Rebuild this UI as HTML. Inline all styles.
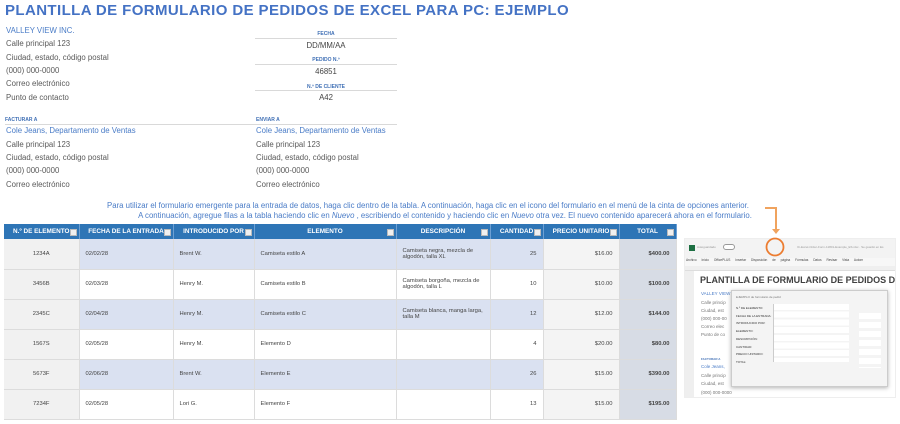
<!DOCTYPE html>
<html><head><meta charset="utf-8"><style>
*{margin:0;padding:0;box-sizing:border-box}
body{width:900px;height:424px;background:#fff;position:relative;overflow:hidden;font-family:"Liberation Sans",sans-serif;color:#595959}
.a{position:absolute;white-space:nowrap}
.t{font-size:7.8px;line-height:9px}
.blue{color:#4a7cc7}
.lbl{font-size:5px;font-weight:bold;color:#3f6fb5}
.hl{position:absolute;height:1px;background:#d9d9d9}
table{position:absolute;left:4px;top:224px;border-collapse:collapse;table-layout:fixed;font-size:5.8px}
th{background:#2e75b6;color:#fff;height:15px;font-size:6.4px;font-weight:bold;position:relative;border-right:1px solid #6d9fd3}
th i{position:absolute;right:2px;top:5px;width:7px;height:7px;background:#f0f0f0;border:1px solid #bbb}
td{height:30px;border-bottom:1.5px solid #dcdcdc;border-right:1px solid #dcdcdc;padding:0 6px;color:#444}
td.c1{background:#f1f1f1;text-align:center}
tr.o td.b{background:#dae1f1}
td.p{background:#f4f4f4;text-align:right}
td.tt{background:#d7dce5;text-align:right;font-weight:bold}
td.r{text-align:right}
</style></head><body>
<div class="a" style="left:5px;top:2px;font-size:15px;font-weight:bold;color:#4472c4;letter-spacing:0.4px">PLANTILLA DE FORMULARIO DE PEDIDOS DE EXCEL PARA PC: EJEMPLO</div>

<div class="a t blue" style="left:6px;top:26px">VALLEY VIEW INC.</div>
<div class="a t" style="left:6px;top:39px">Calle principal 123</div>
<div class="a t" style="left:6px;top:53px">Ciudad, estado, código postal</div>
<div class="a t" style="left:6px;top:66px">(000) 000-0000</div>
<div class="a t" style="left:6px;top:79px">Correo electrónico</div>
<div class="a t" style="left:6px;top:93px">Punto de contacto</div>

<div class="a lbl" style="left:255px;width:142px;text-align:center;top:31px">FECHA</div>
<div class="hl" style="left:255px;width:142px;top:38px"></div>
<div class="a t" style="left:255px;width:142px;text-align:center;top:41px;color:#444">DD/MM/AA</div>
<div class="a lbl" style="left:255px;width:142px;text-align:center;top:57px">PEDIDO N.º</div>
<div class="hl" style="left:255px;width:142px;top:64px"></div>
<div class="a t" style="left:255px;width:142px;text-align:center;top:67px;color:#444">46851</div>
<div class="a lbl" style="left:255px;width:142px;text-align:center;top:84px">N.º DE CLIENTE</div>
<div class="hl" style="left:255px;width:142px;top:90px"></div>
<div class="a t" style="left:255px;width:142px;text-align:center;top:93px;color:#444">A42</div>

<div class="a lbl" style="left:5px;top:117px">FACTURAR A</div>
<div class="a lbl" style="left:256px;top:117px">ENVIAR A</div>
<div class="hl" style="left:5px;width:392px;top:124px"></div>
<div class="a t blue" style="left:6px;top:126px">Cole Jeans, Departamento de Ventas</div>
<div class="a t" style="left:6px;top:140px">Calle principal 123</div>
<div class="a t" style="left:6px;top:153px">Ciudad, estado, código postal</div>
<div class="a t" style="left:6px;top:166px">(000) 000-0000</div>
<div class="a t" style="left:6px;top:180px">Correo electrónico</div>
<div class="a t blue" style="left:256px;top:126px">Cole Jeans, Departamento de Ventas</div>
<div class="a t" style="left:256px;top:140px">Calle principal 123</div>
<div class="a t" style="left:256px;top:153px">Ciudad, estado, código postal</div>
<div class="a t" style="left:256px;top:166px">(000) 000-0000</div>
<div class="a t" style="left:256px;top:180px">Correo electrónico</div>

<div class="a t blue" style="left:0;width:856px;text-align:center;top:201px;font-size:7.8px">Para utilizar el formulario emergente para la entrada de datos, haga clic dentro de la tabla. A continuación, haga clic en el icono del formulario en el menú de la cinta de opciones anterior.</div>
<div class="a t blue" style="left:0;width:890px;text-align:center;top:211px;font-size:7.8px">A continuación, agregue filas a la tabla haciendo clic en <i>Nuevo</i> , escribiendo el contenido y haciendo clic en <i>Nuevo</i>  otra vez. El nuevo contenido aparecerá ahora en el formulario.</div>

<table>
<colgroup><col style="width:75px"><col style="width:94px"><col style="width:81px"><col style="width:142px"><col style="width:94px"><col style="width:53px"><col style="width:76px"><col style="width:57px"></colgroup>
<tr><th>N.º DE ELEMENTO<i></i></th><th>FECHA DE LA ENTRADA<i></i></th><th>INTRODUCIDO POR<i></i></th><th>ELEMENTO<i></i></th><th>DESCRIPCIÓN<i></i></th><th>CANTIDAD<i></i></th><th>PRECIO UNITARIO<i></i></th><th>TOTAL<i></i></th></tr>
<tr class="o"><td class="c1">1234A</td><td class="b">02/02/28</td><td class="b">Brent W.</td><td class="b">Camiseta estilo A</td><td class="b">Camiseta negra, mezcla de algodón, talla XL</td><td class="b r">25</td><td class="p">$16.00</td><td class="tt">$400.00</td></tr>
<tr><td class="c1">3456B</td><td>02/03/28</td><td>Henry M.</td><td>Camiseta estilo B</td><td>Camiseta borgoña, mezcla de algodón, talla L</td><td class="r">10</td><td class="p">$10.00</td><td class="tt">$100.00</td></tr>
<tr class="o"><td class="c1">2345C</td><td class="b">02/04/28</td><td class="b">Henry M.</td><td class="b">Camiseta estilo C</td><td class="b">Camiseta blanca, manga larga, talla M</td><td class="b r">12</td><td class="p">$12.00</td><td class="tt">$144.00</td></tr>
<tr><td class="c1">1567S</td><td>02/05/28</td><td>Henry M.</td><td>Elemento D</td><td></td><td class="r">4</td><td class="p">$20.00</td><td class="tt">$80.00</td></tr>
<tr class="o"><td class="c1">5673F</td><td class="b">02/06/28</td><td class="b">Brent W.</td><td class="b">Elemento E</td><td class="b"></td><td class="b r">26</td><td class="p">$15.00</td><td class="tt">$390.00</td></tr>
<tr><td class="c1">7234F</td><td>02/05/28</td><td>Lori G.</td><td>Elemento F</td><td></td><td class="r">13</td><td class="p">$15.00</td><td class="tt">$195.00</td></tr>
</table>

<!-- screenshot -->
<div class="a" style="left:684px;top:238px;width:212px;height:160px;background:#fff;overflow:hidden;border:1px solid #eee">
  <div class="a" style="left:0;top:0;width:212px;height:20px;background:#f3f3f3"></div>
  <div class="a" style="left:4px;top:6px;width:6px;height:6px;background:#1d6f42"></div>
  <div class="a" style="left:12px;top:6px;font-size:3px;color:#999">Autoguardado</div>
  <div class="a" style="left:38px;top:5px;width:12px;height:6px;border-radius:3px;background:#fff;border:1px solid #999"></div>
  <div class="a" style="left:112px;top:6px;font-size:3px;color:#999">IC-Excel-Order-Form-11801-Example_ES.xlsx · Se guardó en Es</div>
  <div class="a" style="left:0;top:19px;width:212px;height:8px;background:#f7f7f7;font-size:3.2px;color:#444;word-spacing:4px;padding-left:1px;white-space:nowrap">Archivo Inicio OfficePLUS Insertar Disposición&nbsp;de&nbsp;página Fórmulas Datos Revisar Vista Autom</div>
  <div class="a" style="left:0;top:27px;width:212px;height:5px;background:#efefef;border-bottom:1px solid #ddd"></div>
  <div class="a" style="left:0;top:32px;width:9px;height:128px;background:#efefef"></div>
  <div class="a" style="left:15px;top:36px;font-size:9px;font-weight:bold;color:#404040">PLANTILLA DE FORMULARIO DE PEDIDOS DE EX</div>
  <div class="a" style="left:16px;top:52px;font-size:4.5px;color:#4a7cc7">VALLEY VIEW</div>
  <div class="a" style="left:16px;top:60px;font-size:4.5px;line-height:8px;color:#777">Calle princip<br>Ciudad, est<br>(000) 000-00<br>Correo elec<br>Punto de co</div>
  <div class="a" style="left:16px;top:118px;font-size:3px;font-weight:bold;color:#3f6fb5">FACTURAR A</div>
  <div class="a" style="left:16px;top:124px;font-size:4.5px;line-height:8.5px;color:#777"><span style="color:#4a7cc7">Cole Jeans,</span><br>Calle princip<br>Ciudad, est<br>(000) 000-0000</div>
  <div class="a" style="left:46px;top:51px;width:157px;height:97px;background:#f4f4f4;border:1px solid #ccc;box-shadow:0 1px 4px rgba(0,0,0,.3)">
    <div class="a" style="left:4px;top:4px;font-size:3px;color:#777">EJEMPLO de formulario de pedid</div>
    <div class="a" style="left:4px;top:14px;font-size:3px;line-height:7.7px;color:#333">N.º DE ELEMENTO:<br>FECHA DE LA ENTRADA:<br>INTRODUCIDO POR:<br>ELEMENTO:<br>DESCRIPCIÓN:<br>CANTIDAD:<br>PRECIO UNITARIO:<br>TOTAL:</div>
    <div class="a" style="left:41px;top:13px;width:76px;height:58px;background:repeating-linear-gradient(#fff 0 6px,#f4f4f4 6px 7.7px);border-left:1px solid #ccc"></div>
    <div class="a" style="left:127px;top:22px;width:22px;height:55px;background:repeating-linear-gradient(#fff 0 6px,#f4f4f4 6px 9px)"></div>
  </div>
</div>
<svg class="a" style="left:0;top:0" width="900" height="424">
  <path d="M765 208 H776 V230" fill="none" stroke="#f0a35e" stroke-width="2"/>
  <path d="M772 229 L780 229 L776 234 Z" fill="#f0a35e"/>
  <circle cx="775" cy="247" r="8.5" fill="none" stroke="#ec7d31" stroke-width="1.8"/>
</svg>
</body></html>
